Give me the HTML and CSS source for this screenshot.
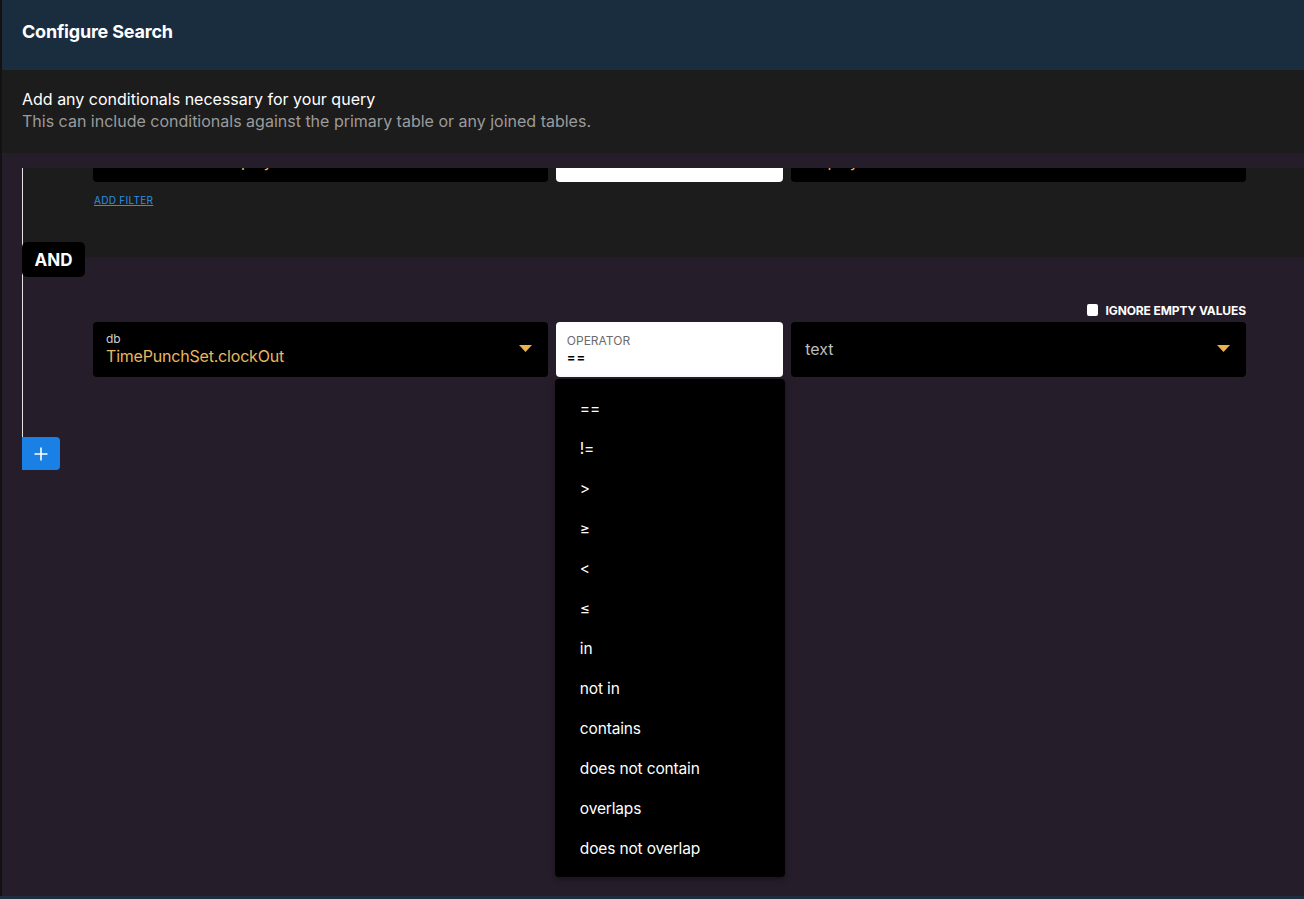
FILE: index.html
```html
<!DOCTYPE html>
<html>
<head>
<meta charset="utf-8">
<link rel="stylesheet" href="styles.css">
</head>
<body>
<div class="app">
  <div class="modal">
    <header class="modal-header">
      <h1 class="title">Configure Search</h1>
    </header>
    <div class="subheader">
      <div class="sub-main">Add any conditionals necessary for your query</div>
      <div class="sub-hint">This can include conditionals against the primary table or any joined tables.</div>
    </div>
    <div class="content">
      <div class="scroll">
        <div class="scroll-inner">
          <div class="groups">
            <div class="group group-first">
              <div class="row">
                <div class="field field-dark">
                  <div class="field-text">
                    <span class="field-label">db</span>
                    <span class="field-value">TimePunchSet.employee</span>
                  </div>
                  <svg class="caret" width="13" height="7" viewBox="0 0 13 7"><polygon points="0,0 13,0 6.5,7" fill="#e9b44c"/></svg>
                </div>
                <div class="field field-light"></div>
                <div class="field field-dark">
                  <div class="field-text">
                    <span class="field-label">&nbsp;</span>
                    <span class="field-value">Employee</span>
                  </div>
                </div>
              </div>
              <div class="add-filter-line"><a class="add-filter" href="#">ADD FILTER</a></div>
            </div>
            <div class="group group-second">
              <div class="and-badge">AND</div>
              <label class="ignore">
                <span class="checkbox"></span>
                <span class="ignore-text">IGNORE EMPTY VALUES</span>
              </label>
              <div class="row">
                <div class="field field-dark">
                  <div class="field-text">
                    <span class="field-label">db</span>
                    <span class="field-value">TimePunchSet.clockOut</span>
                  </div>
                  <svg class="caret" width="13" height="7" viewBox="0 0 13 7"><polygon points="0,0 13,0 6.5,7" fill="#e9b44c"/></svg>
                </div>
                <div class="field field-light operator">
                  <div class="field-text">
                    <span class="op-label">OPERATOR</span>
                    <span class="op-value">==</span>
                  </div>
                  <ul class="menu">
                    <li>==</li>
                    <li>!=</li>
                    <li>&gt;</li>
                    <li>≥</li>
                    <li>&lt;</li>
                    <li>≤</li>
                    <li>in</li>
                    <li>not in</li>
                    <li>contains</li>
                    <li>does not contain</li>
                    <li>overlaps</li>
                    <li>does not overlap</li>
                  </ul>
                </div>
                <div class="field field-dark">
                  <span class="type-value">text</span>
                  <svg class="caret" width="13" height="7" viewBox="0 0 13 7"><polygon points="0,0 13,0 6.5,7" fill="#e9b44c"/></svg>
                </div>
              </div>
            </div>
          </div>
          <button class="add-btn" type="button">
            <svg width="14" height="14" viewBox="0 0 14 14"><path d="M7 0.5V13.5M0.5 7H13.5" stroke="#fff" stroke-width="1.6"/></svg>
          </button>
        </div>
      </div>
    </div>
  </div>
</div>
</body>
</html>
```

FILE: styles.css
```css
* { box-sizing: border-box; }

html, body {
  margin: 0;
  padding: 0;
}

body {
  background: #1b2d3e;
  font-family: Inter, "Noto Sans", "Liberation Sans", sans-serif;
  color: #fff;
  width: 1304px;
  height: 899px;
  overflow: hidden;
}

.app {
  display: flex;
  height: 896px;
  border-left: 2px solid #121212;
}

.modal {
  flex: 1;
  display: flex;
  flex-direction: column;
  background: #261d2a;
}

.modal-header {
  height: 70px;
  background: #1a2d3f;
  display: flex;
  align-items: center;
  padding: 0 20px;
}

.title {
  margin: 0 0 8px 0;
  font-size: 18px;
  font-weight: 700;
  letter-spacing: -0.2px;
}

.subheader {
  background: #1c1c1c;
  height: 83px;
  padding: 18px 20px 0 20px;
  font-size: 16px;
  line-height: 22px;
}

.sub-main { color: #fff; }
.sub-hint { color: #9b9b9b; }

.content {
  flex: 1;
  padding-top: 15px;
  display: flex;
  flex-direction: column;
  min-height: 0;
}

.scroll {
  flex: 1;
  overflow: hidden;
}

.scroll-inner {
  margin-top: -41px;
  padding-left: 20px;
}

.groups {
  border-left: 1px solid #e4e4e4;
}

.group {
  position: relative;
  padding: 0 58px 0 70px;
}

.group-first {
  background: #1c1c1c;
  padding-bottom: 51px;
}

.group-second {
  padding-top: 46px;
  padding-bottom: 60px;
}

.row {
  display: grid;
  grid-template-columns: 2fr 1fr 2fr;
  gap: 8px;
}

.field {
  position: relative;
  height: 55px;
  border-radius: 4px;
  display: flex;
  align-items: center;
  justify-content: space-between;
  padding: 0 16px 0 13px;
}

.field-dark { background: #000; }
.field-light { background: #fff; padding-left: 11px; }

.field-text {
  display: flex;
  flex-direction: column;
  margin-top: -3px;
}

.field-label {
  font-size: 12px;
  line-height: 15px;
  color: #d0d0d0;
}

.field-value {
  font-size: 16px;
  line-height: 20px;
  color: #e9b85e;
  letter-spacing: -0.2px;
}

.caret { flex: none; margin-bottom: 2px; }

.op-label {
  font-size: 12px;
  line-height: 15px;
  color: #6b6b6b;
  margin-top: 2px;
}

.op-value {
  font-size: 13px;
  line-height: 18px;
  color: #000;
  font-weight: 600;
  letter-spacing: 1px;
}

.type-value {
  font-size: 16px;
  color: #bdbdbd;
  margin-left: 1px;
  margin-top: -2px;
}

.add-filter-line {
  margin: 12px 0 0 1px;
  height: 12px;
  font-size: 10px;
  line-height: 12px;
}

.add-filter {
  color: #2e90e0;
  text-decoration: underline;
  letter-spacing: 0.3px;
}

.and-badge {
  position: absolute;
  top: -15px;
  left: -1px;
  width: 63px;
  height: 35px;
  background: #000;
  border-radius: 5px;
  font-size: 17px;
  font-weight: 700;
  display: flex;
  align-items: center;
  justify-content: center;
}

.ignore {
  display: flex;
  justify-content: flex-end;
  align-items: center;
  gap: 7px;
  height: 14px;
  margin-bottom: 5px;
}

.checkbox {
  width: 11px;
  height: 12px;
  background: #fff;
  border-radius: 2px;
}

.ignore-text {
  font-size: 12px;
  font-weight: 700;
  letter-spacing: -0.1px;
}

.menu {
  position: absolute;
  top: calc(100% + 2px);
  left: -1px;
  right: -2px;
  margin: 0;
  padding: 9px 0;
  list-style: none;
  background: #000;
  border-radius: 4px;
  box-shadow: 0 2px 6px rgba(0,0,0,0.4);
  z-index: 5;
}

.menu li {
  height: 40px;
  display: flex;
  align-items: center;
  padding-left: 25px;
  font-size: 15.5px;
  letter-spacing: -0.15px;
  color: #fff;
}

.add-btn {
  display: flex;
  align-items: center;
  justify-content: center;
  width: 38px;
  height: 33px;
  border: none;
  background: #1a80e6;
  border-radius: 0 4px 4px 0;
  padding: 0;
}
```
